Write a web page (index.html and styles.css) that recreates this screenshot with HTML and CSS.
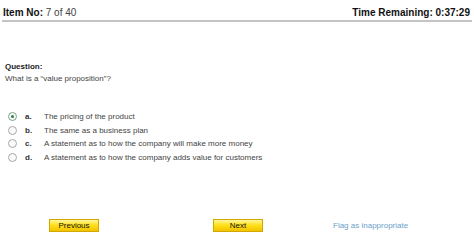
FILE: index.html
```html
<!DOCTYPE html>
<html lang="en">
<head>
  <meta charset="UTF-8" />
  <title>Quiz Item</title>
  <link rel="stylesheet" href="styles.css">
</head>
<body>
  <div class="topo">
    <div><b>Item No:</b> <span class="num">7 of 40</span></div>
    <div><b>Time Remaining: 0:37:29</b></div>
  </div>

  <div class="pergunta">
    <div class="rotulo">Question:</div>
    <div>What is a “value proposition”?</div>
  </div>

  <div class="opcoes">
    <div class="opcao"><span class="radio marcado"></span><span class="letra">a.</span><span>The pricing of the product</span></div>
    <div class="opcao"><span class="radio"></span><span class="letra">b.</span><span>The same as a business plan</span></div>
    <div class="opcao"><span class="radio"></span><span class="letra">c.</span><span>A statement as to how the company will make more money</span></div>
    <div class="opcao"><span class="radio"></span><span class="letra">d.</span><span>A statement as to how the company adds value for customers</span></div>
  </div>

  <div class="acoes">
    <button class="btn-amarelo">Previous</button>
    <button class="btn-amarelo proximo">Next</button>
    <a href="#" class="flag">Flag as inappropriate</a>
  </div>
</body>
</html>
```

FILE: styles.css
```css
body {
  font-family: 'Liberation Sans', Arial, sans-serif;
  background: #ffffff;
  color: #333;
  margin: 0;
  padding: 0;
}

.topo {
  display: flex;
  justify-content: space-between;
  margin: 0 2px;
  padding: 7px 2px 1px 1px;
  font-size: 10px;
  line-height: 12px;
  color: #111;
  border-bottom: 2px solid #c4c4c4;
}

.topo .num {
  color: #444;
}

.pergunta {
  margin-top: 39px;
  padding-left: 5px;
  font-size: 8px;
  line-height: 12px;
  color: #444;
}

.pergunta .rotulo {
  font-weight: bold;
  color: #222;
}

.opcoes {
  margin-top: 25px;
  font-size: 8px;
  color: #444;
}

.opcao {
  display: flex;
  align-items: center;
  height: 13.5px;
}

.radio {
  width: 7px;
  height: 7px;
  border: 1px solid #a8a8a8;
  border-radius: 50%;
  margin-left: 8px;
  display: flex;
  align-items: center;
  justify-content: center;
  background: #fafafa;
}

.radio.marcado {
  border-color: #7aa88a;
}

.radio.marcado::after {
  content: '';
  width: 3px;
  height: 3px;
  border-radius: 50%;
  background: #2e7d46;
}

.letra {
  width: 19px;
  margin-left: 8px;
  font-weight: bold;
  color: #333;
}

.acoes {
  display: flex;
  align-items: center;
  margin-top: 55px;
  padding-left: 49px;
}

.btn-amarelo {
  width: 50px;
  height: 13px;
  padding: 0;
  font-family: inherit;
  font-size: 8px;
  color: #111;
  background: linear-gradient(#fff6a0, #ffe11a 45%, #f2c200);
  border: 1px solid #d2a800;
  border-radius: 0;
}

.proximo {
  margin-left: 114px;
}

.flag {
  margin-left: 70px;
  font-size: 8px;
  color: #6b9fcb;
  text-decoration: none;
}
```
